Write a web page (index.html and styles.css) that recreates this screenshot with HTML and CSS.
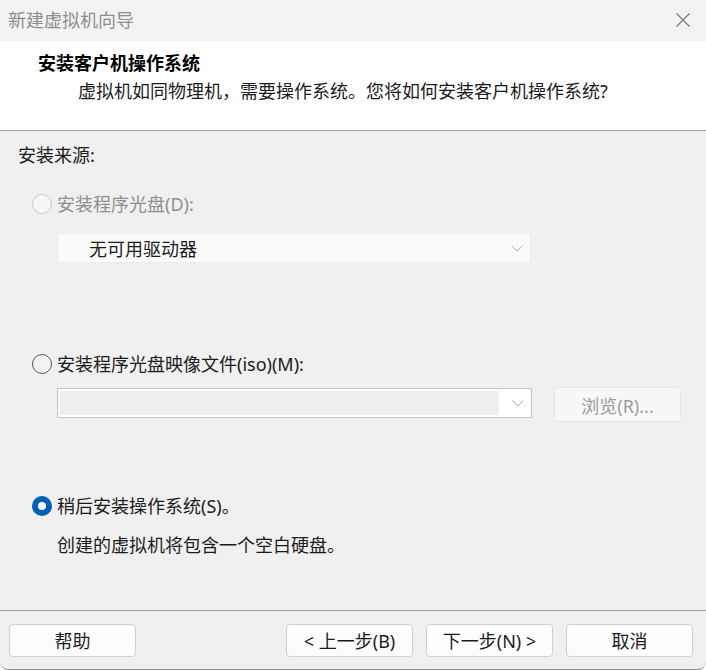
FILE: index.html
```html
<!DOCTYPE html>
<html lang="zh-CN">
<head>
  <meta charset="UTF-8">
  <title>新建虚拟机向导</title>
  <link rel="stylesheet" href="styles.css">
</head>
<body>
  <div class="dialog">
    <div class="titlebar">
      <span class="window-title">新建虚拟机向导</span>
      <svg class="close-icon" width="16" height="16" viewBox="0 0 16 16">
        <path d="M1.5 1.5 L14.5 14.5 M14.5 1.5 L1.5 14.5" stroke="#7a7a7a" stroke-width="1.3" fill="none"/>
      </svg>
    </div>

    <div class="header">
      <div class="header-title">安装客户机操作系统</div>
      <div class="header-sub">虚拟机如同物理机，需要操作系统。您将如何安装客户机操作系统?</div>
    </div>

    <div class="content">
      <div class="section-label">安装来源:</div>

      <div class="option disabled option-disc">
        <span class="radio"></span>
        <span>安装程序光盘(D):</span>
      </div>
      <div class="select disabled">
        <span>无可用驱动器</span>
        <svg class="chevron" width="12" height="7" viewBox="0 0 12 7">
          <path d="M0.5 0.5 L6 6 L11.5 0.5" stroke="#b4b4b4" stroke-width="1" fill="none"/>
        </svg>
      </div>

      <div class="option option-iso">
        <span class="radio"></span>
        <span>安装程序光盘映像文件(iso)(M):</span>
      </div>
      <div class="file-row">
        <div class="combo">
          <div class="combo-field"></div>
          <svg class="chevron" width="12" height="7" viewBox="0 0 12 7">
            <path d="M0.5 0.5 L6 6 L11.5 0.5" stroke="#a8a8a8" stroke-width="1" fill="none"/>
          </svg>
        </div>
        <button class="browse-btn" disabled>浏览(R)...</button>
      </div>

      <div class="option checked option-later">
        <span class="radio"></span>
        <span>稍后安装操作系统(S)。</span>
      </div>
      <div class="desc">创建的虚拟机将包含一个空白硬盘。</div>
    </div>

    <div class="footer">
      <button class="btn">帮助</button>
      <div class="footer-right">
        <button class="btn">&lt; 上一步(B)</button>
        <button class="btn">下一步(N) &gt;</button>
        <button class="btn">取消</button>
      </div>
    </div>
  </div>
</body>
</html>
```

FILE: styles.css
```css
html {
  background-color: #ffffff;
}
body {
  margin: 0;
  padding: 0;
  font-family: "Noto Sans", "Noto Sans CJK SC", sans-serif;
  font-size: 18px;
  color: #1b1b1b;
}
.dialog {
  width: 706px;
  height: 669px;
  background-color: #f0f0f0;
  border-bottom: 1px solid #8c8c8c;
  border-radius: 0 0 8px 8px;
  overflow: hidden;
  display: flex;
  flex-direction: column;
}
.titlebar {
  height: 41px;
  flex-shrink: 0;
  background-color: #f3f3f3;
  display: flex;
  align-items: center;
  justify-content: space-between;
  padding: 0 15px 2px 8px;
  box-sizing: border-box;
}
.window-title {
  color: #8d8d8d;
  font-size: 18px;
  line-height: 24px;
}
.close-icon {
  display: block;
  margin-top: 1px;
}
.header {
  height: 90px;
  flex-shrink: 0;
  background-color: #ffffff;
  border-bottom: 1px solid #a0a0a0;
  padding-top: 10px;
  box-sizing: border-box;
}
.header-title {
  padding-left: 38px;
  font-weight: bold;
  line-height: 24px;
  color: #000;
}
.header-sub {
  padding-left: 78px;
  margin-top: 4px;
  line-height: 24px;
  color: #1b1b1b;
}
.content {
  height: 479px;
  flex-shrink: 0;
  padding-top: 12px;
  box-sizing: border-box;
}
.section-label {
  padding-left: 18px;
  line-height: 24px;
}
.option {
  display: flex;
  align-items: center;
  padding-left: 32px;
  line-height: 24px;
}
.option-disc {
  margin-top: 25px;
}
.option-iso {
  margin-top: 89px;
}
.option-later {
  margin-top: 72px;
}
.radio {
  width: 20px;
  height: 20px;
  border: 1px solid #555;
  border-radius: 50%;
  box-sizing: border-box;
  background-color: #f2f2f2;
  margin-right: 5px;
}
.option.disabled {
  color: #8e8e8e;
}
.option.disabled .radio {
  border-color: #c6c6c6;
  background-color: #f6f6f6;
}
.option.checked .radio {
  border: 6px solid #005fb8;
  background-color: #ffffff;
}
.select {
  margin: 17px 0 0 57px;
  width: 474px;
  height: 30px;
  background-color: #fbfbfb;
  border: 1px solid #ececec;
  box-sizing: border-box;
  display: flex;
  align-items: center;
  justify-content: space-between;
  padding: 0 7px 0 31px;
  color: #1b1b1b;
}
.chevron {
  display: block;
}
.file-row {
  display: flex;
  align-items: flex-start;
  margin-top: 11px;
  padding-left: 57px;
}
.combo {
  margin-top: 1px;
  width: 475px;
  height: 30px;
  background-color: #ffffff;
  border: 1px solid #c4c4c4;
  box-sizing: border-box;
  display: flex;
  align-items: center;
  padding: 2px 7px 2px 2px;
}
.combo-field {
  width: 443px;
  height: 24px;
  background-color: #efefef;
  margin-right: 13px;
}
.browse-btn {
  margin-left: 22px;
  width: 127px;
  height: 35px;
  background-color: #f8f8f8;
  border: 1px solid #e6e6e6;
  border-radius: 4px;
  font-family: inherit;
  font-size: 18px;
  color: #9c9c9c;
  padding: 0;
}
.desc {
  margin-top: 15px;
  padding-left: 57px;
  line-height: 24px;
}
.footer {
  flex: 1;
  border-top: 1px solid #a0a0a0;
  display: flex;
  justify-content: space-between;
  padding: 13px 13px 0 9px;
}
.footer-right {
  display: flex;
  gap: 13px;
}
.btn {
  width: 127px;
  height: 33px;
  background-color: #fdfdfd;
  border: 1px solid #d0d0d0;
  border-radius: 4px;
  font-family: inherit;
  font-size: 18px;
  color: #1b1b1b;
  padding: 0;
  line-height: 24px;
}
.btn:hover {
  background-color: #f5f5f5;
}
```
